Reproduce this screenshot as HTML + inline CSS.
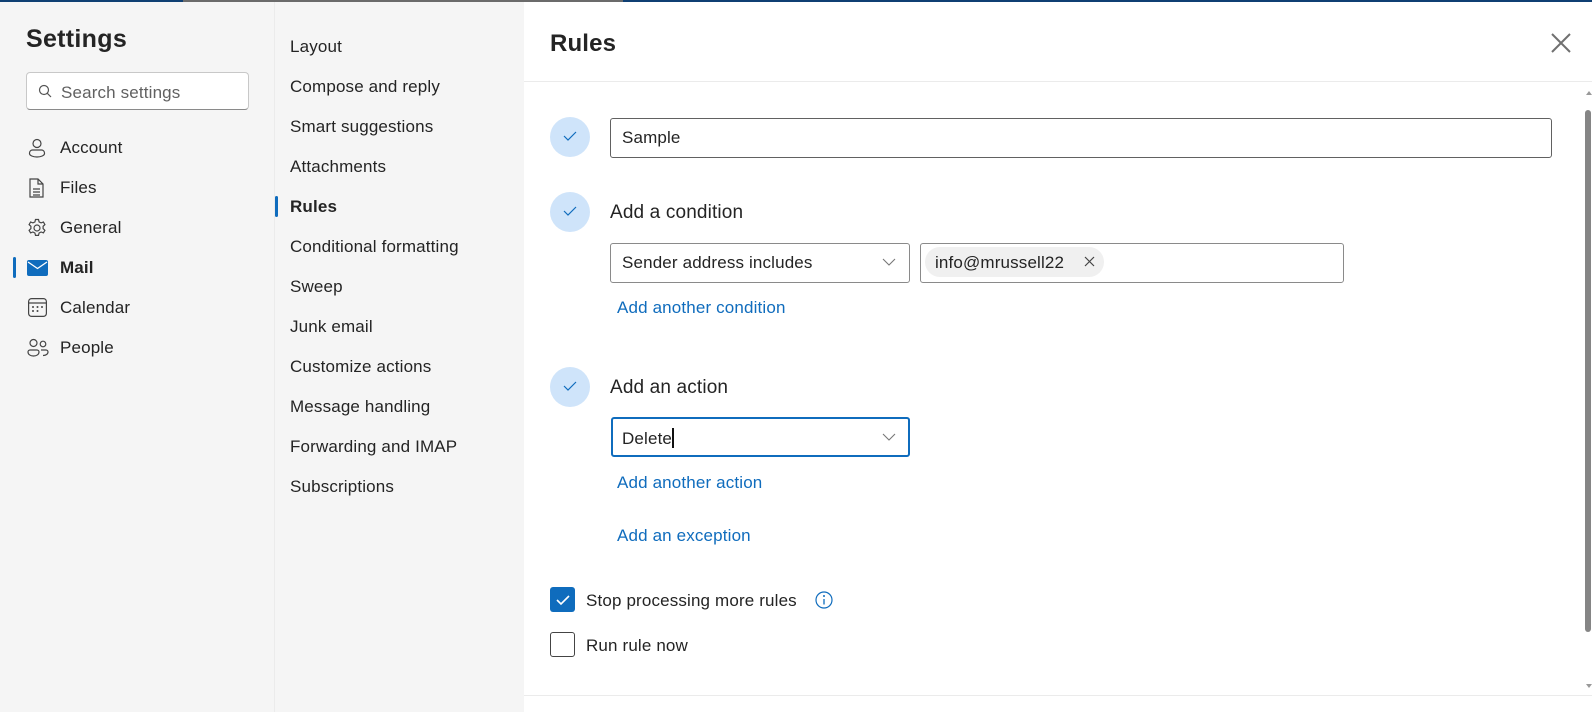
<!DOCTYPE html>
<html><head><meta charset="utf-8"><style>
*{margin:0;padding:0;box-sizing:border-box}
body{width:1592px;height:712px;overflow:hidden;font-family:"Liberation Sans",sans-serif;color:#242424;background:#fff;position:relative}
.a{position:absolute}
.t{position:absolute;font-size:17px;letter-spacing:0.15px;line-height:20px;white-space:nowrap}
.lk{color:#0f6cbd}
svg{position:absolute;overflow:visible}
</style></head><body>
<div class="a" style="left:0;top:0;width:274px;height:712px;background:#f5f5f5"></div>
<div class="a" style="left:274px;top:0;width:250px;height:712px;background:#f5f5f5;border-left:1px solid #ebebeb"></div>
<div class="a" style="left:0;top:0;width:183px;height:2px;background:#0f3f73"></div>
<div class="a" style="left:183px;top:0;width:440px;height:2px;background:#6b6b6b"></div>
<div class="a" style="left:623px;top:0;width:969px;height:2px;background:#0f3f73"></div>

<div class="t" style="left:26px;top:24px;font-size:25px;line-height:30px;font-weight:bold;color:#242424;letter-spacing:0.3px">Settings</div>
<div class="a" style="left:26px;top:72px;width:223px;height:38px;background:#fff;border:1px solid #c8c8c8;border-bottom-color:#8a8a8a;border-radius:4px"></div>
<svg style="left:38px;top:84px" width="14" height="14"><circle cx="6" cy="6" r="4.5" fill="none" stroke="#555" stroke-width="1.2"/><line x1="9.3" y1="9.3" x2="13" y2="13" stroke="#555" stroke-width="1.2"/></svg>
<div class="t" style="left:61px;top:83px;color:#616161">Search settings</div>

<svg style="left:27px;top:138px" width="20" height="20"><circle cx="10" cy="5.5" r="4" fill="none" stroke="#444" stroke-width="1.2"/><path d="M2.5 15a3 3 0 0 1 3-3h9a3 3 0 0 1 3 3v0.5c0 2-3.5 3.5-7.5 3.5s-7.5-1.5-7.5-3.5z" fill="none" stroke="#444" stroke-width="1.2"/></svg>
<div class="t" style="left:60px;top:138px">Account</div>
<svg style="left:29px;top:178px" width="16" height="20"><path d="M1 1h8l5 5v13H1z M9 1v5h5 M4 11h7 M4 14h7 M4 17h7" fill="none" stroke="#444" stroke-width="1.2"/></svg>
<div class="t" style="left:60px;top:178px">Files</div>
<svg style="left:27px;top:218px" width="20" height="20"><circle cx="10" cy="10" r="3" fill="none" stroke="#444" stroke-width="1.2"/><path d="M8.5 1.5h3l.6 2.4 2 1 2.3-.9 1.5 2.6-1.8 1.7v2.3l1.8 1.7-1.5 2.6-2.3-.9-2 1-.6 2.4h-3l-.6-2.4-2-1-2.3.9-1.5-2.6 1.8-1.7V8.3L2.1 6.6l1.5-2.6 2.3.9 2-1z" fill="none" stroke="#444" stroke-width="1.2"/></svg>
<div class="t" style="left:60px;top:218px">General</div>
<div class="a" style="left:13px;top:257px;width:3px;height:21px;background:#0f6cbd;border-radius:2px"></div>
<svg style="left:27px;top:260px" width="21" height="16"><rect x="0" y="0" width="21" height="16" rx="2" fill="#0f6cbd"/><path d="M1 2l9.5 6.5L20 2" fill="none" stroke="#fff" stroke-width="1.3"/></svg>
<div class="t" style="left:60px;top:258px;font-weight:bold">Mail</div>
<svg style="left:28px;top:298px" width="19" height="19"><rect x="0.6" y="0.6" width="17.8" height="17.8" rx="3" fill="none" stroke="#444" stroke-width="1.2"/><line x1="1" y1="5" x2="18" y2="5" stroke="#444" stroke-width="1.2"/><g fill="#444"><circle cx="5" cy="9" r="1"/><circle cx="9.5" cy="9" r="1"/><circle cx="14" cy="9" r="1"/><circle cx="5" cy="13" r="1"/><circle cx="9.5" cy="13" r="1"/></g></svg>
<div class="t" style="left:60px;top:298px">Calendar</div>
<svg style="left:27px;top:338px" width="22" height="20"><circle cx="6.5" cy="5" r="3.5" fill="none" stroke="#444" stroke-width="1.2"/><circle cx="16" cy="6" r="2.8" fill="none" stroke="#444" stroke-width="1.2"/><path d="M1 14a2 2 0 0 1 2-2h7a2 2 0 0 1 2 2c0 2.5-2.5 4-5.5 4S1 16.5 1 14z M14 12h5a2 2 0 0 1 2 2c0 2-2 3.5-5 3.5" fill="none" stroke="#444" stroke-width="1.2"/></svg>
<div class="t" style="left:60px;top:338px">People</div>

<div class="t" style="left:290px;top:37px">Layout</div>
<div class="t" style="left:290px;top:77px">Compose and reply</div>
<div class="t" style="left:290px;top:117px">Smart suggestions</div>
<div class="t" style="left:290px;top:157px">Attachments</div>
<div class="a" style="left:275px;top:196px;width:3px;height:21px;background:#0f6cbd;border-radius:2px"></div>
<div class="t" style="left:290px;top:197px;font-weight:bold">Rules</div>
<div class="t" style="left:290px;top:237px">Conditional formatting</div>
<div class="t" style="left:290px;top:277px">Sweep</div>
<div class="t" style="left:290px;top:317px">Junk email</div>
<div class="t" style="left:290px;top:357px">Customize actions</div>
<div class="t" style="left:290px;top:397px">Message handling</div>
<div class="t" style="left:290px;top:437px">Forwarding and IMAP</div>
<div class="t" style="left:290px;top:477px">Subscriptions</div>

<div class="t" style="left:550px;top:29px;font-size:24px;line-height:30px;font-weight:bold">Rules</div>
<svg style="left:1551px;top:33px" width="20" height="20"><path d="M1 1L19 19M19 1L1 19" stroke="#707070" stroke-width="2"/></svg>
<div class="a" style="left:524px;top:81px;width:1068px;height:1px;background:#ebebeb"></div>
<div class="a" style="left:524px;top:695px;width:1068px;height:1px;background:#ebebeb"></div>
<div class="a" style="left:1585px;top:110px;width:6px;height:522px;background:#858585;border-radius:3px"></div>
<svg style="left:1586px;top:91px" width="6" height="4"><path d="M0 4L3 0 6 4z" fill="#999"/></svg>
<svg style="left:1586px;top:684px" width="6" height="4"><path d="M0 0L3 4 6 0z" fill="#999"/></svg>

<div class="a" style="left:550px;top:117px;width:40px;height:40px;border-radius:50%;background:#cfe4fa"></div>
<svg style="left:563px;top:131px" width="14" height="10"><path d="M1 5l4 4 8-8" fill="none" stroke="#0f6cbd" stroke-width="1.2"/></svg>
<div class="a" style="left:610px;top:118px;width:942px;height:40px;border:1px solid #616161;border-radius:3px"></div>
<div class="t" style="left:622px;top:128px">Sample</div>

<div class="a" style="left:550px;top:192px;width:40px;height:40px;border-radius:50%;background:#cfe4fa"></div>
<svg style="left:563px;top:206px" width="14" height="10"><path d="M1 5l4 4 8-8" fill="none" stroke="#0f6cbd" stroke-width="1.2"/></svg>
<div class="t" style="left:610px;top:202px;font-size:19px;line-height:22px">Add a condition</div>
<div class="a" style="left:610px;top:243px;width:300px;height:40px;border:1px solid #8a8a8a;border-radius:3px"></div>
<div class="t" style="left:622px;top:253px">Sender address includes</div>
<svg style="left:882px;top:258px" width="14" height="8"><path d="M1 1l6 6 6-6" fill="none" stroke="#777" stroke-width="1.1"/></svg>
<div class="a" style="left:920px;top:243px;width:424px;height:40px;border:1px solid #8a8a8a;border-radius:3px"></div>
<div class="a" style="left:925px;top:247px;width:179px;height:30px;border-radius:15px;background:#f0f0f0"></div>
<div class="t" style="left:935px;top:253px">info@mrussell22</div>
<svg style="left:1084px;top:256px" width="11" height="11"><path d="M1 1l9 9M10 1l-9 9" stroke="#444" stroke-width="1.2"/></svg>
<div class="t lk" style="left:617px;top:298px">Add another condition</div>

<div class="a" style="left:550px;top:367px;width:40px;height:40px;border-radius:50%;background:#cfe4fa"></div>
<svg style="left:563px;top:381px" width="14" height="10"><path d="M1 5l4 4 8-8" fill="none" stroke="#0f6cbd" stroke-width="1.2"/></svg>
<div class="t" style="left:610px;top:377px;font-size:19px;line-height:22px">Add an action</div>
<div class="a" style="left:611px;top:417px;width:299px;height:40px;border:2px solid #0f6cbd;border-radius:3px"></div>
<div class="t" style="left:622px;top:428px">Delete<span style="display:inline-block;width:2px;height:20px;background:#111;vertical-align:-4px"></span></div>
<svg style="left:882px;top:433px" width="14" height="8"><path d="M1 1l6 6 6-6" fill="none" stroke="#777" stroke-width="1.1"/></svg>
<div class="t lk" style="left:617px;top:473px">Add another action</div>
<div class="t lk" style="left:617px;top:526px">Add an exception</div>

<div class="a" style="left:550px;top:587px;width:25px;height:25px;border-radius:3px;background:#0f6cbd"></div>
<svg style="left:556px;top:595px" width="14" height="10"><path d="M1 5l4 4 8-8" fill="none" stroke="#fff" stroke-width="1.6"/></svg>
<div class="t" style="left:586px;top:591px">Stop processing more rules</div>
<svg style="left:815px;top:591px" width="18" height="18"><circle cx="9" cy="9" r="8" fill="none" stroke="#0f6cbd" stroke-width="1.2"/><circle cx="9" cy="5" r="1" fill="#0f6cbd"/><line x1="9" y1="8" x2="9" y2="13.5" stroke="#0f6cbd" stroke-width="1.3"/></svg>
<div class="a" style="left:550px;top:632px;width:25px;height:25px;border-radius:3px;border:1.5px solid #444"></div>
<div class="t" style="left:586px;top:636px">Run rule now</div>
</body></html>
